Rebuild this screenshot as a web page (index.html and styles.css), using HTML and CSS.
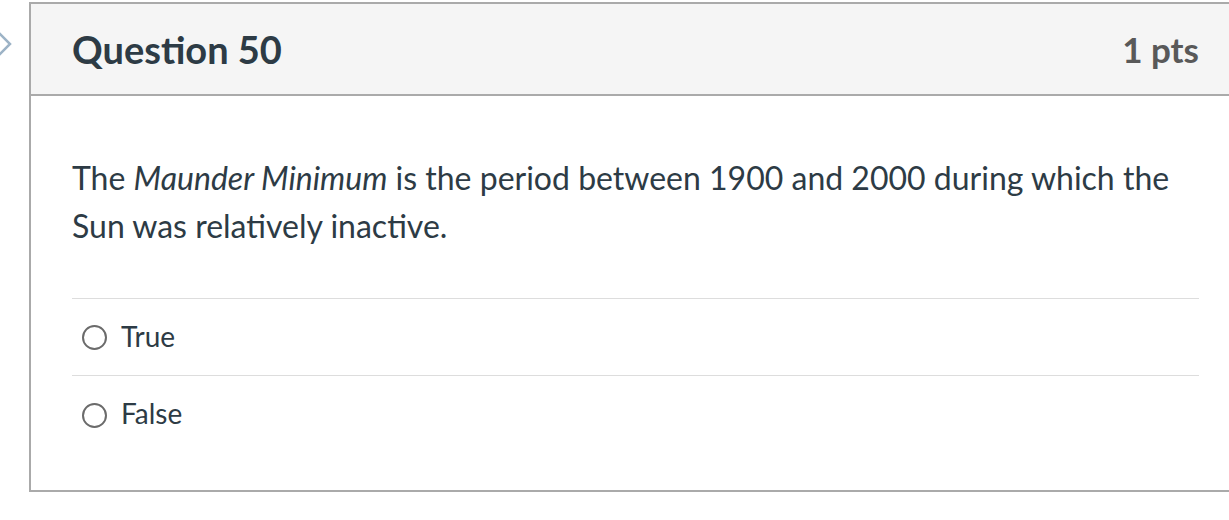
FILE: index.html
```html
<!DOCTYPE html>
<html>
<head>
<meta charset="utf-8">
<link rel="stylesheet" href="styles.css">
</head>
<body>
<div class="page">
  <div class="gutter">
    <svg class="chev" width="14" height="30" viewBox="0 0 14 30"><polyline points="-2,1 10,13 -2,25" fill="none" stroke="#9db3c6" stroke-width="2.5" stroke-linejoin="miter"/></svg>
  </div>
  <div class="card">
    <div class="header">
      <span class="title">Question 50</span>
      <span class="pts">1 pts</span>
    </div>
    <div class="body">
      <p class="qtext">The <em>Maunder Minimum</em> is the period between 1900 and 2000 during which the Sun was relatively inactive.</p>
      <div class="answers">
        <label class="answer"><span class="radio"></span><span class="alabel">True</span></label>
        <label class="answer"><span class="radio"></span><span class="alabel">False</span></label>
      </div>
    </div>
  </div>
</div>
</body>
</html>
```
FILE: styles.css
```css
html, body {
  margin: 0;
  padding: 0;
  background: #fff;
  overflow: hidden;
}
body {
  font-family: Lato, "Open Sans", sans-serif;
  color: #2d3b45;
}
.page {
  display: flex;
  align-items: flex-start;
  padding-top: 2px;
}
.gutter {
  width: 29px;
  flex: none;
  padding-top: 29px;
}
.chev {
  display: block;
}
.card {
  flex: none;
  width: 1199px;
  border: 2px solid #aaaaaa;
}
.header {
  height: 90px;
  background: #f5f5f5;
  border-bottom: 2px solid #aaaaaa;
  display: flex;
  align-items: center;
  justify-content: space-between;
  padding: 0 31px 0 41px;
}
.title {
  font-weight: 700;
  font-size: 38px;
  color: #2d3b45;
}
.pts {
  font-weight: 700;
  font-size: 35px;
  color: #595959;
}
.body {
  padding: 58px 31px 37px 41px;
}
.qtext {
  margin: 0;
  font-size: 32px;
  line-height: 48px;
  padding-bottom: 48px;
  border-bottom: 1px solid #dddddd;
}
.answers {
  display: flex;
  flex-direction: column;
}
.answer {
  height: 77px;
  display: flex;
  align-items: center;
  padding-bottom: 3px;
  box-sizing: border-box;
  border-bottom: 1px solid #dddddd;
}
.answer:last-child {
  border-bottom: none;
}
.radio {
  width: 21px;
  height: 21px;
  border: 2px solid #6b6b6b;
  border-radius: 50%;
  margin-left: 10px;
  margin-right: 14px;
  margin-top: 4px;
  flex: none;
}
.alabel {
  font-size: 28px;
}
```
